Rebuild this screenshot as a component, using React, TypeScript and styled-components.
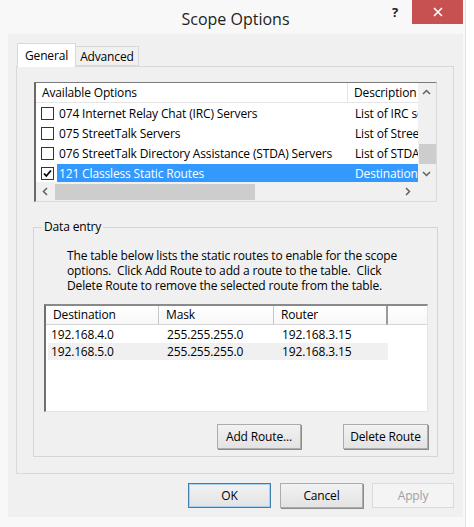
import React from 'react'
import styled, { createGlobalStyle } from 'styled-components'

const GlobalStyle = createGlobalStyle`
  body {
    margin: 0;
    background: #ffffff;
    font-family: 'Open Sans', 'Noto Sans', Arial, sans-serif;
    font-size: 12px;
    letter-spacing: -0.15px;
    color: #000;
  }
  * {
    box-sizing: border-box;
  }
`

const options = [
  { id: '074', name: '074 Internet Relay Chat (IRC) Servers', desc: 'List of IRC servers', checked: false },
  { id: '075', name: '075 StreetTalk Servers', desc: 'List of StreetTalk servers', checked: false },
  { id: '076', name: '076 StreetTalk Directory Assistance (STDA) Servers', desc: 'List of STDA servers', checked: false },
  { id: '121', name: '121 Classless Static Routes', desc: 'Destination, mask and router', checked: true },
]

const routes = [
  { dest: '192.168.4.0', mask: '255.255.255.0', router: '192.168.3.15' },
  { dest: '192.168.5.0', mask: '255.255.255.0', router: '192.168.3.15' },
]

const App: React.FC = () => {
  return (
    <>
      <GlobalStyle />
      <Frame>
        <TitleBar>
          <span />
          <Title>Scope Options</Title>
          <Controls>
            <HelpButton>?</HelpButton>
            <CloseButton>
              <svg width="10" height="10" viewBox="0 0 10 10">
                <path d="M1 1 L9 9 M9 1 L1 9" stroke="#fff" strokeWidth="1.6" />
              </svg>
            </CloseButton>
          </Controls>
        </TitleBar>

        <Client>
          <TabStrip>
            <Tab $active>General</Tab>
            <Tab>Advanced</Tab>
          </TabStrip>
          <TabPage>
            <ListView>
              <ListMain>
                <ListHeader>
                  <HeaderCell $width={312}>Available Options</HeaderCell>
                  <HeaderCell $width={71}>Description</HeaderCell>
                </ListHeader>
                {options.map((o, i) => (
                  <OptionRow key={o.id}>
                    <CheckBox>
                      {o.checked && (
                        <svg width="11" height="11" viewBox="0 0 11 11">
                          <path d="M2 5.5 L4.3 8 L9 2.5" stroke="#000" strokeWidth="1.8" fill="none" />
                        </svg>
                      )}
                    </CheckBox>
                    <OptionName $selected={i === 3}>{o.name}</OptionName>
                    <OptionDesc $selected={i === 3}>{o.desc}</OptionDesc>
                  </OptionRow>
                ))}
              </ListMain>
              <VScroll>
                <ArrowBox>
                  <svg width="9" height="6" viewBox="0 0 9 6">
                    <path d="M1 5 L4.5 1.5 L8 5" stroke="#606060" strokeWidth="1.5" fill="none" />
                  </svg>
                </ArrowBox>
                <VTrack>
                  <VThumb />
                </VTrack>
                <ArrowBox>
                  <svg width="9" height="6" viewBox="0 0 9 6">
                    <path d="M1 1 L4.5 4.5 L8 1" stroke="#606060" strokeWidth="1.5" fill="none" />
                  </svg>
                </ArrowBox>
              </VScroll>
              <HScroll>
                <ArrowBox>
                  <svg width="6" height="9" viewBox="0 0 6 9">
                    <path d="M5 1 L1.5 4.5 L5 8" stroke="#606060" strokeWidth="1.5" fill="none" />
                  </svg>
                </ArrowBox>
                <HTrack>
                  <HThumb />
                </HTrack>
                <ArrowBox>
                  <svg width="6" height="9" viewBox="0 0 6 9">
                    <path d="M1 1 L4.5 4.5 L1 8" stroke="#606060" strokeWidth="1.5" fill="none" />
                  </svg>
                </ArrowBox>
              </HScroll>
              <Corner />
            </ListView>

            <GroupBox>
              <Legend>Data entry</Legend>
              <Hint>
                The table below lists the static routes to enable for the scope
                <br />
                options.&nbsp; Click Add Route to add a route to the table.&nbsp; Click
                <br />
                Delete Route to remove the selected route from the table.
              </Hint>
              <RouteTable>
                <RouteHeader>
                  <RouteHeadCell $width={113}>Destination</RouteHeadCell>
                  <RouteHeadCell $width={115}>Mask</RouteHeadCell>
                  <RouteHeadCell $width={114} $strong>Router</RouteHeadCell>
                  <RouteHeadFiller />
                </RouteHeader>
                <RouteBody>
                  {routes.map((r, i) => (
                    <RouteRow key={r.dest} $shaded={i === 1}>
                      <RouteCell $width={116}>{r.dest}</RouteCell>
                      <RouteCell $width={115}>{r.mask}</RouteCell>
                      <RouteCell $width={109}>{r.router}</RouteCell>
                    </RouteRow>
                  ))}
                </RouteBody>
              </RouteTable>
              <GroupButtons>
                <Button $width={84}>Add Route...</Button>
                <Button $width={85}>Delete Route</Button>
              </GroupButtons>
            </GroupBox>
          </TabPage>

          <DialogButtons>
            <Button $width={83} $default>OK</Button>
            <Button $width={83}>Cancel</Button>
            <Button $width={82} disabled>Apply</Button>
          </DialogButtons>
        </Client>
      </Frame>
    </>
  )
}

export default App

const Frame = styled.div`
  width: 466px;
  height: 527px;
  display: flex;
  flex-direction: column;
  padding: 0 2px 10px 8px;
  background: #f8f8f8;
  border-right: 1px solid #e4e4e4;
`

const TitleBar = styled.div`
  height: 35px;
  display: grid;
  grid-template-columns: 1fr auto 1fr;
  align-items: start;
`

const Title = styled.div`
  font-size: 16px;
  line-height: 20px;
  letter-spacing: 0;
  padding-top: 9px;
  color: #222;
`

const Controls = styled.div`
  display: flex;
  justify-content: flex-end;
  align-items: flex-start;
`

const HelpButton = styled.div`
  width: 34px;
  height: 24px;
  font-weight: 700;
  font-size: 13px;
  line-height: 24px;
  text-align: center;
  color: #222;
`

const CloseButton = styled.div`
  width: 51px;
  height: 24px;
  background: #c75050;
  display: flex;
  align-items: center;
  justify-content: center;
`

const Client = styled.div`
  flex: 1;
  display: flex;
  flex-direction: column;
  background: #f0f0f0;
  padding: 9px 9px 9px 8px;
`

const TabStrip = styled.div`
  height: 23px;
  display: flex;
  align-items: flex-end;
  padding-left: 1px;
  position: relative;
  z-index: 1;
`

const Tab = styled.div<{ $active?: boolean }>`
  height: ${(p) => (p.$active ? '24px' : '20px')};
  margin-bottom: ${(p) => (p.$active ? '-1px' : '0')};
  padding: ${(p) => (p.$active ? '2px 7px 0 7px' : '0 4px 0 4px')};
  line-height: 19px;
  border: 1px solid #d9d9d9;
  border-bottom: ${(p) => (p.$active ? 'none' : '1px solid #d9d9d9')};
  border-left: ${(p) => (p.$active ? '1px solid #d9d9d9' : 'none')};
  background: ${(p) => (p.$active ? '#ffffff' : '#f0f0f0')};
  color: #000;
`

const TabPage = styled.div`
  height: 408px;
  border: 1px solid #d9d9d9;
  background: #f0f0f0;
  padding: 15px 16px 0 17px;
  display: flex;
  flex-direction: column;
`

const ListView = styled.div`
  height: 120px;
  display: grid;
  grid-template-columns: 1fr 18px;
  grid-template-rows: 1fr 19px;
  background: #ffffff;
  border-style: solid;
  border-width: 1px 1px 1px 2px;
  border-color: #7a7a7a #dadada #dadada #6a6a6a;
  overflow: hidden;
`

const ListMain = styled.div`
  overflow: hidden;
  white-space: nowrap;
`

const ListHeader = styled.div`
  display: flex;
  height: 20px;
  border-bottom: 1px solid #e5e5e5;
`

const HeaderCell = styled.div<{ $width: number }>`
  width: ${(p) => p.$width}px;
  flex: none;
  padding-left: 6px;
  line-height: 20px;
  border-right: 1px solid #e5e5e5;
  overflow: hidden;
`

const OptionRow = styled.div`
  display: flex;
  align-items: center;
  height: 20px;
`

const CheckBox = styled.div`
  width: 13px;
  height: 13px;
  margin: 0 3px 0 5px;
  border: 1px solid #333;
  background: #fff;
  flex: none;
  display: flex;
  align-items: center;
  justify-content: center;
`

const OptionName = styled.div<{ $selected: boolean }>`
  width: 291px;
  flex: none;
  height: 19px;
  line-height: 19px;
  padding-left: 2px;
  overflow: hidden;
  background: ${(p) => (p.$selected ? '#3399ff' : 'transparent')};
  color: ${(p) => (p.$selected ? '#fff' : '#000')};
`

const OptionDesc = styled.div<{ $selected: boolean }>`
  width: 71px;
  flex: none;
  height: 19px;
  line-height: 19px;
  padding-left: 7px;
  overflow: hidden;
  background: ${(p) => (p.$selected ? '#3399ff' : 'transparent')};
  color: ${(p) => (p.$selected ? '#fff' : '#000')};
`

const VScroll = styled.div`
  display: flex;
  flex-direction: column;
  background: #f0f0f0;
`

const ArrowBox = styled.div`
  width: 17px;
  height: 17px;
  flex: none;
  display: flex;
  align-items: center;
  justify-content: center;
`

const VTrack = styled.div`
  flex: 1;
  position: relative;
`

const VThumb = styled.div`
  position: absolute;
  left: 1px;
  right: 0;
  top: 44px;
  height: 20px;
  background: #cdcdcd;
`

const HScroll = styled.div`
  display: flex;
  align-items: center;
  background: #f0f0f0;
  padding: 0 2px 0 0;
`

const HTrack = styled.div`
  flex: 1;
  height: 100%;
  position: relative;
`

const HThumb = styled.div`
  position: absolute;
  left: 2px;
  width: 200px;
  top: 2px;
  bottom: 1px;
  background: #cdcdcd;
`

const Corner = styled.div`
  background: #f0f0f0;
`

const GroupBox = styled.fieldset`
  margin: 17px -1px 0 -1px;
  height: 238px;
  min-width: 0;
  padding: 13px 9px 0 10px;
  border: 1px solid #d5d5d5;
  display: flex;
  flex-direction: column;
`

const Legend = styled.legend`
  padding: 0 2px;
  margin-left: -2px;
  line-height: 16px;
`

const Hint = styled.p`
  margin: 0 0 11px 23px;
  line-height: 15px;
`

const RouteTable = styled.div`
  height: 108px;
  background: #ffffff;
  border-style: solid;
  border-width: 2px 1px 1px 2px;
  border-color: #8a8a8a #e3e3e3 #e3e3e3 #707070;
  overflow: hidden;
  white-space: nowrap;
`

const RouteHeader = styled.div`
  display: flex;
  height: 19px;
`

const RouteHeadCell = styled.div<{ $width: number; $strong?: boolean }>`
  width: ${(p) => p.$width}px;
  flex: none;
  padding-left: 7px;
  line-height: 17px;
  background: linear-gradient(#ffffff, #f7f7f7);
  border-right: ${(p) => (p.$strong ? '2px solid #9a9a9a' : '1px solid #c8c8c8')};
  border-bottom: 1px solid #d5d5d5;
`

const RouteHeadFiller = styled.div`
  flex: 1;
  background: linear-gradient(#ffffff, #f7f7f7);
  border-bottom: 1px solid #d5d5d5;
`

const RouteBody = styled.div`
  padding: 1px 0 0 2px;
`

const RouteRow = styled.div<{ $shaded: boolean }>`
  display: flex;
  width: 340px;
  height: 17px;
  line-height: 17px;
  background: ${(p) => (p.$shaded ? '#f0f0f0' : 'transparent')};
`

const RouteCell = styled.div<{ $width: number }>`
  width: ${(p) => p.$width}px;
  flex: none;
  padding-left: 3px;
`

const GroupButtons = styled.div`
  display: flex;
  justify-content: flex-end;
  gap: 42px;
  margin-top: 12px;
`

const Button = styled.button<{ $width: number; $default?: boolean }>`
  width: ${(p) => p.$width}px;
  height: 25px;
  padding: 0;
  font-family: inherit;
  font-size: 12px;
  letter-spacing: -0.15px;
  color: #000;
  background: linear-gradient(#f2f2f2, #e3e3e3);
  border: 1px solid ${(p) => (p.$default ? '#3c7fb1' : '#acacac')};
  box-shadow: ${(p) => (p.$default ? 'inset 0 0 0 1px #a8d1f2' : '1px 1px 0 #8c8c8c')};
  &:disabled {
    color: #a0a0a0;
    background: #f4f4f4;
    border-color: #dadada;
    box-shadow: none;
  }
`

const DialogButtons = styled.div`
  display: flex;
  justify-content: flex-end;
  gap: 9px;
  margin-top: 9px;
`
